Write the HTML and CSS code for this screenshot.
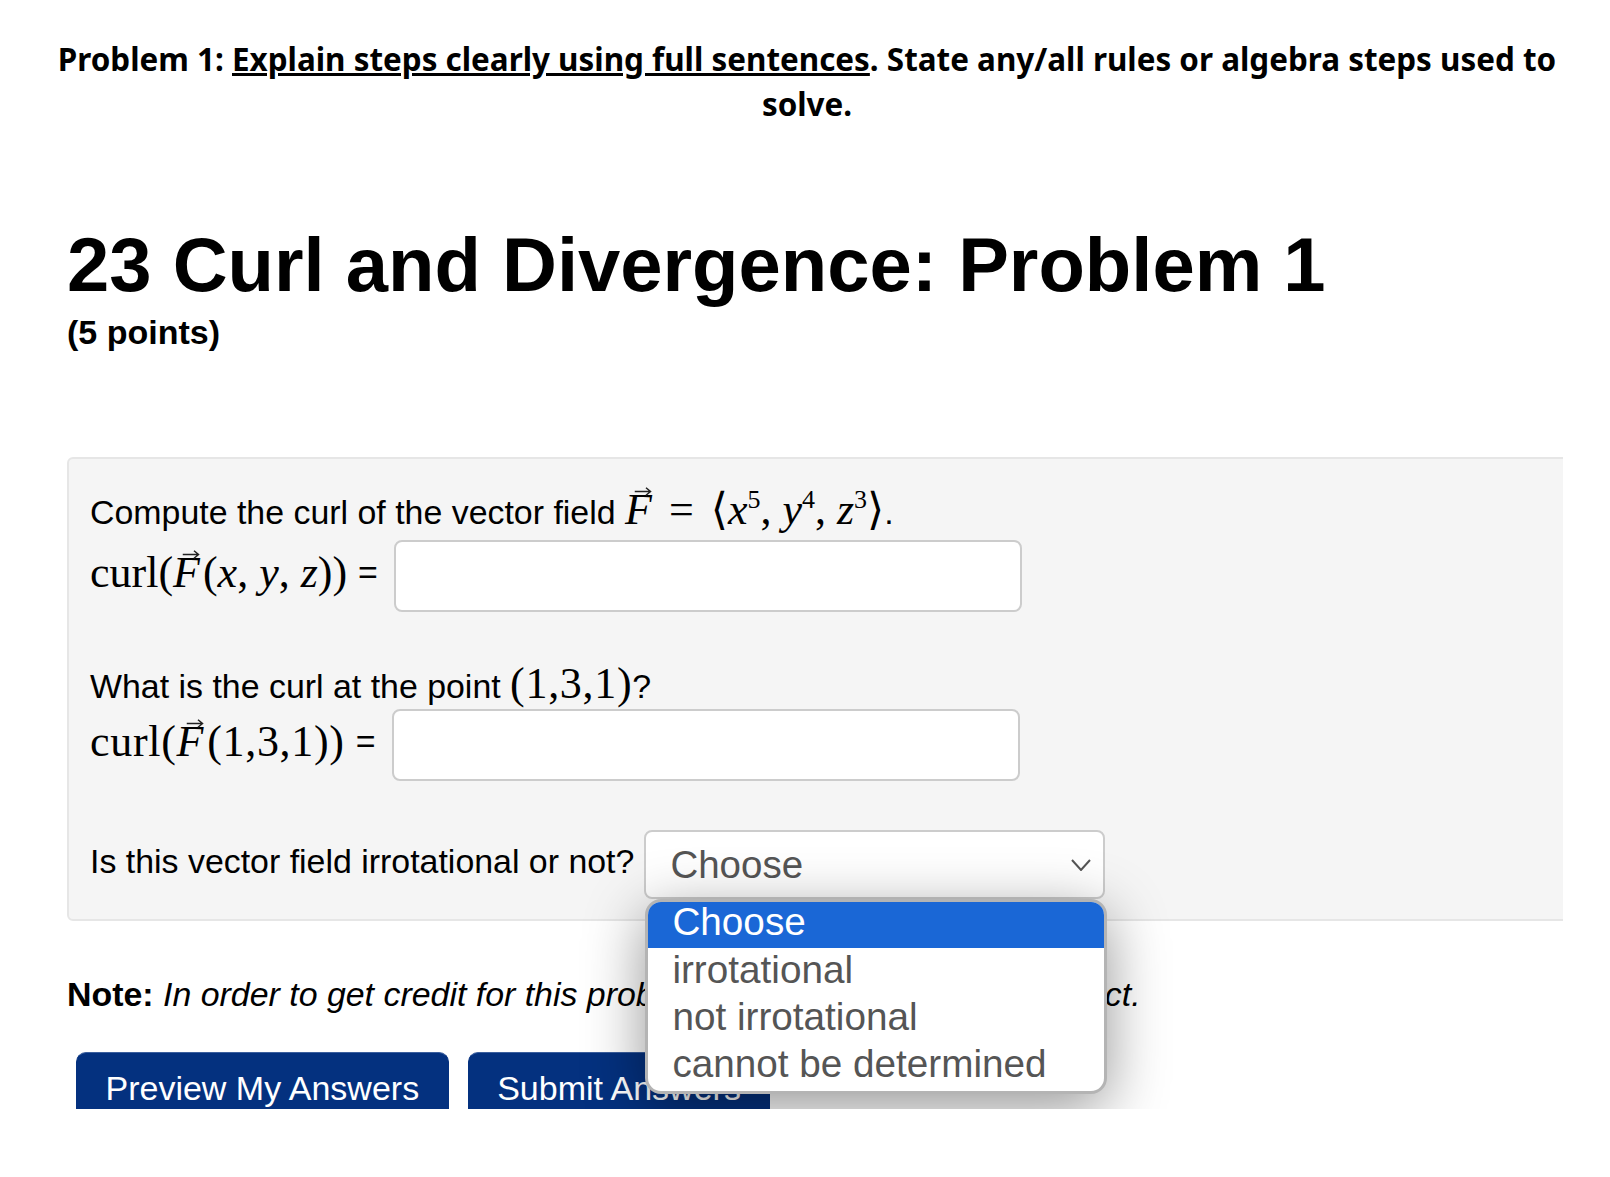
FILE: index.html
```html
<!DOCTYPE html>
<html lang="en">

<head>
    <meta charset="UTF-8">
    <title>Curl and Divergence</title>
    <link rel="stylesheet" href="styles.css">
</head>

<body>
    <p class="instructions">Problem 1: <u>Explain steps clearly using full sentences</u>. State any/all rules or algebra steps used to solve.</p>

    <div class="sheet">
        <h1>23 Curl and Divergence: Problem 1</h1>
        <div class="points">(5 points)</div>

        <div class="panel">
            <div class="line">Compute the curl of the vector field <span class="math"><span class="vec"><i>F</i><svg viewBox="0 0 24 12"><path d="M1 6h21M16 1l6 5-6 5" /></svg></span> <span class="eq">=</span> <span class="angle">⟨</span><i>x</i><sup>5</sup>, <i>y</i><sup>4</sup>, <i>z</i><sup>3</sup><span class="angle">⟩</span></span>.</div>
            <div class="row">
                <span class="math">curl(<span class="vec"><i>F</i><svg viewBox="0 0 24 12"><path d="M1 6h21M16 1l6 5-6 5" /></svg></span>(<i>x</i>, <i>y</i>, <i>z</i>))</span>
                <span class="equals">=</span>
                <input class="answer" type="text">
            </div>

            <div class="line second">What is the curl at the point <span class="math tuple">(1,3,1)</span>?</div>
            <div class="row">
                <span class="math tuple">curl(<span class="vec"><i>F</i><svg viewBox="0 0 24 12"><path d="M1 6h21M16 1l6 5-6 5" /></svg></span>(1,3,1))</span>
                <span class="equals">=</span>
                <input class="answer" type="text">
            </div>

            <div class="row choice">
                <span class="question">Is this vector field irrotational or not?</span>
                <div class="picker">
                    <div class="select">Choose
                        <svg class="chevron" viewBox="0 0 20 12"><path d="M1 1l9 10 9-10" /></svg>
                    </div>
                    <!-- open list hangs over the note and buttons -->
                    <div class="options">
                        <div class="option active">Choose</div>
                        <div class="option">irrotational</div>
                        <div class="option">not irrotational</div>
                        <div class="option">cannot be determined</div>
                    </div>
                </div>
            </div>
        </div>

        <p class="note"><b>Note:</b> <i>In order to get credit for this problem all answers must be correct.</i></p>

        <div class="buttons">
            <button>Preview My Answers</button>
            <button>Submit Answers</button>
        </div>
    </div>
</body>

</html>
```

FILE: styles.css
```css
body {
    margin: 0;
    background: #fff;
    color: #000;
    font-family: "Liberation Sans", Arial, sans-serif;
}

.instructions {
    margin: 0;
    padding: 36px 50px 0 54px;
    font-family: "Noto Sans", sans-serif;
    font-weight: 700;
    font-size: 31.4px;
    line-height: 45px;
    text-align: center;
}

.sheet {
    margin-left: 67px;
    width: 1496px;
    height: 983px;
    overflow: hidden;
}

h1 {
    margin: 97px 0 0;
    font-size: 76px;
    line-height: 84px;
}

.points {
    font-size: 34px;
    font-weight: 700;
    line-height: 40px;
    margin-top: 5px;
}

.panel {
    width: 1600px;
    height: 464px;
    box-sizing: border-box;
    margin-top: 105px;
    padding: 22px 21px;
    background: #f5f5f5;
    border: 2px solid #e6e6e6;
    border-radius: 6px;
    font-size: 33.9px;
}

.line {
    line-height: 55px;
    white-space: nowrap;
}

.second {
    margin-top: 49px;
    line-height: 45px;
}

.row {
    display: flex;
    align-items: center;
    white-space: nowrap;
}

.math {
    font-family: "Liberation Serif", serif;
    font-size: 44px;
}

.row .math,
.equals {
    margin-bottom: 8px;
}

.tuple {
    letter-spacing: 0.7px;
}

.vec {
    position: relative;
    display: inline-block;
}

.row .vec {
    margin-right: 3px;
}

.vec svg {
    position: absolute;
    left: 9px;
    top: 3px;
    width: 18px;
    height: 9px;
}

.line .vec svg {
    top: 5px;
}

.vec path,
.chevron path {
    fill: none;
    stroke: #222;
    stroke-width: 2;
}

.eq {
    margin: 0 6px;
}

.angle {
    font-family: "DejaVu Serif", serif;
}

sup {
    font-size: 26px;
    line-height: 0;
}

.equals {
    margin-left: 11px;
    margin-right: 16px;
}

.answer {
    width: 628px;
    height: 72px;
    box-sizing: border-box;
    background: #fff;
    border: 2px solid #ccc;
    border-radius: 8px;
}

.choice {
    margin-top: 49px;
}

.question {
    margin-bottom: 6px;
}

.picker {
    position: relative;
    margin-left: 10px;
}

.select {
    position: relative;
    width: 461px;
    height: 69px;
    box-sizing: border-box;
    padding-left: 24px;
    background: #fff;
    border: 2px solid #ccc;
    border-radius: 8px;
    color: #555;
    font-size: 38.5px;
    line-height: 65px;
}

.chevron {
    position: absolute;
    right: 12px;
    top: 27px;
    width: 20px;
    height: 12px;
}

.chevron path {
    stroke: #555;
}

.options {
    position: absolute;
    left: 1px;
    top: 69px;
    width: 462px;
    box-sizing: border-box;
    padding-bottom: 2px;
    background: #fff;
    border: 3px solid #b4b4b4;
    border-radius: 16px;
    overflow: hidden;
    box-shadow: 0 14px 60px rgba(0, 0, 0, 0.42);
    color: #555;
    font-size: 38.7px;
}

.option {
    height: 47px;
    padding-left: 24px;
    line-height: 43px;
}

.active {
    height: 46px;
    line-height: 40px;
    background: #1a67d6;
    color: #fff;
}

.note {
    margin: 51px 0 0;
    font-size: 33.9px;
    line-height: 44px;
}

.buttons {
    display: flex;
    gap: 19px;
    margin: 36px 0 0 9px;
}

button {
    padding: 16px 28.5px 40px;
    background: #04317f;
    border: 1px solid #04317f;
    border-top-color: #3b5f9e;
    border-radius: 10px;
    color: #fff;
    font-family: inherit;
    font-size: 34px;
}
```
